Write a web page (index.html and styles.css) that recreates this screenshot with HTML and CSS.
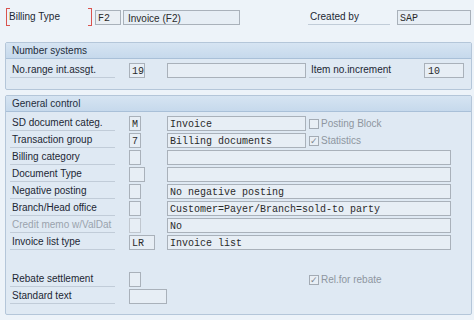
FILE: index.html
```html
<!DOCTYPE html>
<html lang="en">
<head>
  <meta charset="UTF-8">
  <title>Billing Type F2</title>
  <link rel="stylesheet" href="styles.css">
</head>
<body>
  <div class="screen">
    <div class="toprow">
      <div class="req-label">Billing Type</div>
      <div class="fld f-code">F2</div>
      <div class="fld f-desc">Invoice (F2)</div>
      <div class="lbl l-created">Created by</div>
      <div class="fld f-sap">SAP</div>
    </div>

    <div class="group g-num">
      <div class="group-head">Number systems</div>
      <div class="row">
        <div class="lbl">No.range int.assgt.</div>
        <div class="key"><div class="fld w15">19</div></div>
        <div class="fld w-mid"></div>
        <div class="lbl l-inc">Item no.increment</div>
        <div class="fld f-inc">10</div>
      </div>
    </div>

    <div class="group g-gen">
      <div class="group-head">General control</div>
      <div class="row">
        <div class="lbl">SD document categ.</div>
        <div class="key"><div class="fld w12">M</div></div>
        <div class="fld w-mid">Invoice</div>
        <div class="chk-wrap"><span class="chk"></span>Posting Block</div>
      </div>
      <div class="row">
        <div class="lbl">Transaction group</div>
        <div class="key"><div class="fld w12">7</div></div>
        <div class="fld w-mid">Billing documents</div>
        <div class="chk-wrap"><span class="chk on">&#10003;</span>Statistics</div>
      </div>
      <div class="row">
        <div class="lbl">Billing category</div>
        <div class="key"><div class="fld w12"></div></div>
        <div class="fld w-long"></div>
      </div>
      <div class="row">
        <div class="lbl">Document Type</div>
        <div class="key"><div class="fld w15"></div></div>
        <div class="fld w-long"></div>
      </div>
      <div class="row">
        <div class="lbl">Negative posting</div>
        <div class="key"><div class="fld w12"></div></div>
        <div class="fld w-long">No negative posting</div>
      </div>
      <div class="row">
        <div class="lbl">Branch/Head office</div>
        <div class="key"><div class="fld w12"></div></div>
        <div class="fld w-long">Customer=Payer/Branch=sold-to party</div>
      </div>
      <div class="row">
        <div class="lbl dim">Credit memo w/ValDat</div>
        <div class="key"><div class="fld w12 pale"></div></div>
        <div class="fld w-long">No</div>
      </div>
      <div class="row">
        <div class="lbl">Invoice list type</div>
        <div class="key"><div class="fld w25">LR</div></div>
        <div class="fld w-long">Invoice list</div>
      </div>
      <div class="row empty"></div>
      <div class="row">
        <div class="lbl">Rebate settlement</div>
        <div class="key"><div class="fld w12"></div></div>
        <div class="spacer"></div>
        <div class="chk-wrap"><span class="chk on">&#10003;</span>Rel.for rebate</div>
      </div>
      <div class="row">
        <div class="lbl">Standard text</div>
        <div class="key"><div class="fld w48"></div></div>
      </div>
    </div>
  </div>
</body>
</html>
```

FILE: styles.css
```css
body {
  margin: 0;
  background-color: #edf3f9;
  font-family: "Liberation Sans", Arial, sans-serif;
  font-size: 10px;
  color: #1c2733;
}
.screen {
  width: 474px;
  height: 320px;
  padding: 8px 2px 0 5px;
  box-sizing: border-box;
  overflow: hidden;
}
.toprow {
  display: flex;
  align-items: center;
  height: 18px;
  margin-bottom: 16px;
}
.req-label {
  position: relative;
  width: 83px;
  height: 18px;
  line-height: 18px;
  padding-left: 3px;
  margin-left: 1px;
}
.req-label::before,
.req-label::after {
  content: "";
  position: absolute;
  top: 0;
  width: 3px;
  height: 16px;
  border: 1px solid #d9534f;
}
.req-label::before {
  left: 0;
  border-right: none;
}
.req-label::after {
  right: 0;
  border-left: none;
}
.fld {
  height: 15px;
  line-height: 15px;
  box-sizing: border-box;
  border: 1px solid #a9b1ba;
  background-color: #e7eef5;
  font-family: "Liberation Mono", "Courier New", monospace;
  font-size: 10px;
  color: #2a2a2a;
  padding-left: 2px;
  white-space: nowrap;
  overflow: hidden;
}
.f-code {
  width: 26px;
  margin-left: 3px;
  background-color: #eaeff4;
}
.f-desc {
  width: 117px;
  margin-left: 2px;
  font-family: "Liberation Sans", Arial, sans-serif;
  font-size: 10px;
  padding-left: 4px;
}
.lbl {
  width: 105px;
  height: 15px;
  line-height: 14px;
  box-sizing: border-box;
  padding-left: 2px;
  border-bottom: 1px solid #c1ccd8;
  white-space: nowrap;
}
.l-created {
  width: 82px;
  margin-left: 68px;
}
.f-sap {
  width: 74px;
  margin-left: 7px;
}
.group {
  border: 1px solid #b4c6d9;
  border-radius: 2px;
  background-color: #dfe9f3;
  width: 467px;
  box-sizing: border-box;
}
.g-num {
  height: 48px;
  margin-bottom: 5px;
}
.g-gen {
  height: 220px;
}
.group-head {
  height: 15px;
  line-height: 15px;
  padding-left: 6px;
  background: linear-gradient(#d6e4f2, #c6d9ec);
  border-bottom: 1px solid #a9c0d8;
  color: #1f2d3c;
  margin-bottom: 3px;
}
.row {
  display: flex;
  align-items: center;
  height: 17px;
  padding-left: 4px;
}
.row.empty {
  height: 20px;
}
.key {
  width: 38px;
  margin-left: 14px;
  display: flex;
}
.w12 { width: 12px; }
.w15 { width: 16px; }
.w25 { width: 26px; }
.w48 { width: 48px; }
.w-mid { width: 139px; }
.w-long { width: 284px; }
.spacer { width: 139px; }
.pale {
  border-color: #c0c7cf;
}
.dim {
  color: #9aa3ad;
}
.l-inc {
  width: 78px;
  margin-left: 3px;
}
.f-inc {
  width: 40px;
  margin-left: 37px;
  padding-left: 3px;
}
.chk-wrap {
  display: flex;
  align-items: center;
  margin-left: 3px;
  color: #8e969f;
}
.chk {
  width: 10px;
  height: 10px;
  box-sizing: border-box;
  border: 1px solid #a3abb4;
  background-color: #e9eff5;
  margin-right: 2px;
  font-size: 9px;
  line-height: 8px;
  text-align: center;
  color: #7d8791;
}
```
